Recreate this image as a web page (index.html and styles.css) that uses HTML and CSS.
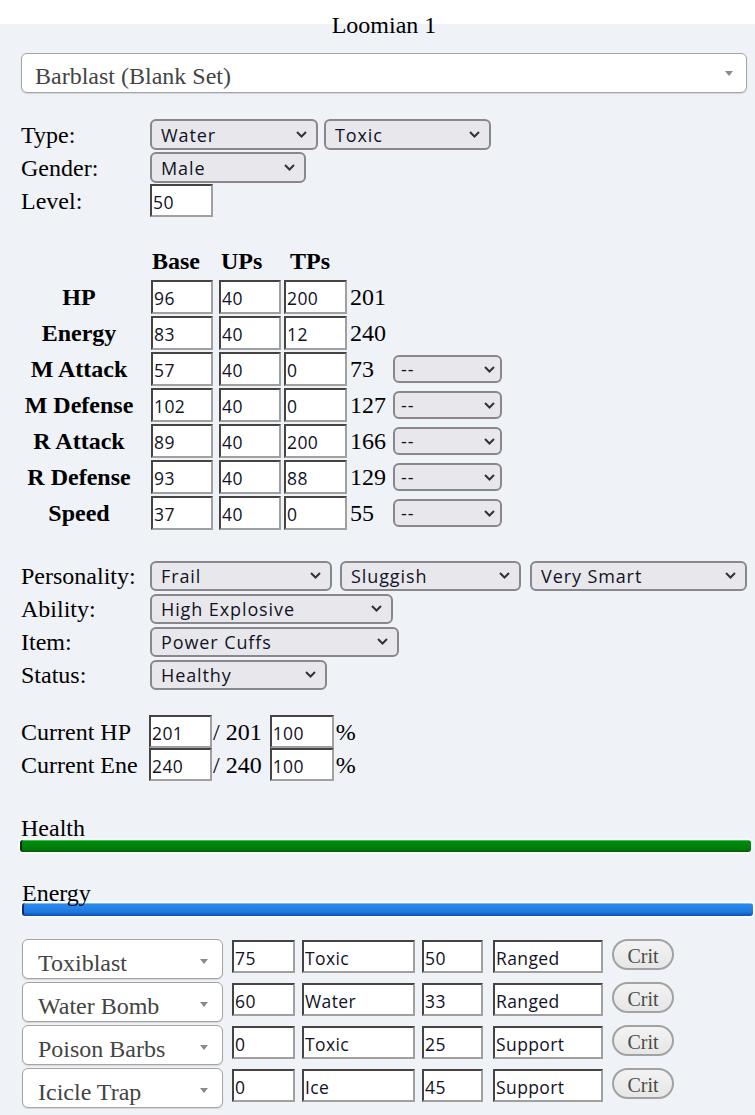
FILE: index.html
```html
<!DOCTYPE html>
<html lang="en">
<head>
<meta charset="utf-8">
<title>Loomian 1</title>
<link rel="stylesheet" href="styles.css">
</head>
<body>
<div class="loomian">
  <h2 class="title">Loomian 1</h2>

  <div class="set-select">
    <span>Barblast (Blank Set)</span>
    <span class="caret"></span>
  </div>

  <div class="info">
    <div class="row">
      <span class="label">Type:</span>
      <div class="sel w-type1"><span>Water</span><svg class="chev" viewBox="0 0 11 7"><path d="M1 1L5.5 5.5L10 1"/></svg></div>
      <div class="sel w-type2"><span>Toxic</span><svg class="chev" viewBox="0 0 11 7"><path d="M1 1L5.5 5.5L10 1"/></svg></div>
    </div>
    <div class="row">
      <span class="label">Gender:</span>
      <div class="sel w-gender"><span>Male</span><svg class="chev" viewBox="0 0 11 7"><path d="M1 1L5.5 5.5L10 1"/></svg></div>
    </div>
    <div class="row">
      <span class="label">Level:</span>
      <input class="num w-level" type="text" value="50">
    </div>
  </div>

  <div class="stats">
    <span></span><span class="head h-base">Base</span><span class="head h-up">UPs</span><span class="head h-tp">TPs</span><span></span><span></span>

    <span class="stat">HP</span>
    <input class="num" value="96"><input class="num up" value="40"><input class="num tp" value="200">
    <span class="val">201</span><span></span>

    <span class="stat">Energy</span>
    <input class="num" value="83"><input class="num up" value="40"><input class="num tp" value="12">
    <span class="val">240</span><span></span>

    <span class="stat">M Attack</span>
    <input class="num" value="57"><input class="num up" value="40"><input class="num tp" value="0">
    <span class="val">73</span>
    <div class="sel w-boost"><span>--</span><svg class="chev" viewBox="0 0 11 7"><path d="M1 1L5.5 5.5L10 1"/></svg></div>

    <span class="stat">M Defense</span>
    <input class="num" value="102"><input class="num up" value="40"><input class="num tp" value="0">
    <span class="val">127</span>
    <div class="sel w-boost"><span>--</span><svg class="chev" viewBox="0 0 11 7"><path d="M1 1L5.5 5.5L10 1"/></svg></div>

    <span class="stat">R Attack</span>
    <input class="num" value="89"><input class="num up" value="40"><input class="num tp" value="200">
    <span class="val">166</span>
    <div class="sel w-boost"><span>--</span><svg class="chev" viewBox="0 0 11 7"><path d="M1 1L5.5 5.5L10 1"/></svg></div>

    <span class="stat">R Defense</span>
    <input class="num" value="93"><input class="num up" value="40"><input class="num tp" value="88">
    <span class="val">129</span>
    <div class="sel w-boost"><span>--</span><svg class="chev" viewBox="0 0 11 7"><path d="M1 1L5.5 5.5L10 1"/></svg></div>

    <span class="stat">Speed</span>
    <input class="num" value="37"><input class="num up" value="40"><input class="num tp" value="0">
    <span class="val">55</span>
    <div class="sel w-boost"><span>--</span><svg class="chev" viewBox="0 0 11 7"><path d="M1 1L5.5 5.5L10 1"/></svg></div>
  </div>

  <div class="traits">
    <div class="row">
      <span class="label">Personality:</span>
      <div class="sel w-pers1"><span>Frail</span><svg class="chev" viewBox="0 0 11 7"><path d="M1 1L5.5 5.5L10 1"/></svg></div>
      <div class="sel w-pers2"><span>Sluggish</span><svg class="chev" viewBox="0 0 11 7"><path d="M1 1L5.5 5.5L10 1"/></svg></div>
      <div class="sel w-pers3"><span>Very Smart</span><svg class="chev" viewBox="0 0 11 7"><path d="M1 1L5.5 5.5L10 1"/></svg></div>
    </div>
    <div class="row">
      <span class="label">Ability:</span>
      <div class="sel w-ability"><span>High Explosive</span><svg class="chev" viewBox="0 0 11 7"><path d="M1 1L5.5 5.5L10 1"/></svg></div>
    </div>
    <div class="row">
      <span class="label">Item:</span>
      <div class="sel w-item"><span>Power Cuffs</span><svg class="chev" viewBox="0 0 11 7"><path d="M1 1L5.5 5.5L10 1"/></svg></div>
    </div>
    <div class="row">
      <span class="label">Status:</span>
      <div class="sel w-status"><span>Healthy</span><svg class="chev" viewBox="0 0 11 7"><path d="M1 1L5.5 5.5L10 1"/></svg></div>
    </div>
  </div>

  <div class="current">
    <div class="row">
      <span class="label">Current HP</span>
      <input class="num w-level" value="201">
      <span class="max">/ 201</span>
      <input class="num w-pct" value="100">
      <span class="pct">%</span>
    </div>
    <div class="row">
      <span class="label">Current Ene</span>
      <input class="num w-level" value="240">
      <span class="max">/ 240</span>
      <input class="num w-pct" value="100">
      <span class="pct">%</span>
    </div>
  </div>

  <div class="meter-label health-label">Health</div>
  <div class="meter health"></div>
  <div class="meter-label energy-label">Energy</div>
  <div class="meter energy"></div>

  <div class="moves">
    <div class="move">
      <div class="move-select"><span>Toxiblast</span><span class="caret"></span></div>
      <input class="num m-bp" value="75">
      <input class="num m-type" value="Toxic">
      <input class="num m-en" value="50">
      <input class="num m-cat" value="Ranged">
      <button class="crit">Crit</button>
    </div>
    <div class="move">
      <div class="move-select"><span>Water Bomb</span><span class="caret"></span></div>
      <input class="num m-bp" value="60">
      <input class="num m-type" value="Water">
      <input class="num m-en" value="33">
      <input class="num m-cat" value="Ranged">
      <button class="crit">Crit</button>
    </div>
    <div class="move">
      <div class="move-select"><span>Poison Barbs</span><span class="caret"></span></div>
      <input class="num m-bp" value="0">
      <input class="num m-type" value="Toxic">
      <input class="num m-en" value="25">
      <input class="num m-cat" value="Support">
      <button class="crit">Crit</button>
    </div>
    <div class="move">
      <div class="move-select"><span>Icicle Trap</span><span class="caret"></span></div>
      <input class="num m-bp" value="0">
      <input class="num m-type" value="Ice">
      <input class="num m-en" value="45">
      <input class="num m-cat" value="Support">
      <button class="crit">Crit</button>
    </div>
  </div>
</div>
</body>
</html>
```

FILE: styles.css
```css
* {
  box-sizing: border-box;
}

body {
  margin: 0;
  background: #ffffff;
  font-family: "Liberation Serif", "Times New Roman", serif;
  font-size: 24px;
  color: #000;
}

.loomian {
  width: 755px;
  min-height: 1115px;
  background: linear-gradient(#ffffff 0 24px, #eff2f7 24px);
  overflow: hidden;
}

.title {
  margin: 0;
  padding: 12px 0 0 13px;
  font-size: 24px;
  font-weight: normal;
  line-height: 26px;
  text-align: center;
}

/* big set picker and move pickers */
.set-select,
.move-select {
  display: flex;
  justify-content: space-between;
  background: #fff;
  border: 1.5px solid #a4a4a4;
  border-radius: 6px;
  box-shadow: 0 1px 1px rgba(0, 0, 0, 0.12);
  color: #444;
  line-height: 24px;
}

.set-select {
  margin: 15px 8px 0 21px;
  height: 40px;
  padding: 10px 13px 0 13px;
}

.caret {
  width: 0;
  height: 0;
  margin-top: 7px;
  border-left: 4px solid transparent;
  border-right: 4px solid transparent;
  border-top: 5px solid #8a8a8a;
}

/* form rows */
.row {
  display: flex;
  align-items: center;
  height: 33px;
  padding-left: 21px;
}

.label {
  width: 129px;
  flex: none;
  line-height: 26px;
}

.info {
  margin-top: 25px;
}

.sel {
  display: flex;
  align-items: center;
  justify-content: space-between;
  height: 31px;
  padding: 0 9px 0 9px;
  background: #e8e8ec;
  border: 2px solid #88888c;
  border-radius: 6px;
  font-family: "Open Sans", "DejaVu Sans", sans-serif;
  font-size: 18px;
  letter-spacing: 0.9px;
  color: #121226;
  flex: none;
}

.chev {
  width: 11px;
  height: 7px;
  fill: none;
  stroke: #333;
  stroke-width: 2;
}

.w-type1 { width: 168px; }
.w-type2 { width: 167px; margin-left: 6px; }
.w-gender { width: 156px; }
.w-boost { width: 109px; height: 28px; padding-right: 5px; padding-left: 6px; }
.w-pers1 { width: 182px; height: 30px; }
.w-pers2 { width: 181px; height: 30px; margin-left: 8px; }
.w-pers3 { width: 217px; height: 30px; margin-left: 9px; }
.w-ability { width: 243px; height: 30px; }
.w-item { width: 249px; height: 30px; }
.w-status { width: 177px; height: 30px; }

/* sunken text fields */
.num {
  display: block;
  margin: 0;
  height: 34px;
  padding: 2px 0 0 1px;
  background: #fff;
  border: 2px solid;
  border-color: #444 #a0a0a0 #a0a0a0 #444;
  border-radius: 0;
  font-family: "Open Sans", "DejaVu Sans", sans-serif;
  font-size: 17.5px;
  letter-spacing: 0.4px;
  color: #121226;
  outline: none;
}

.w-level {
  width: 63px;
  height: 33px;
}

.w-pct {
  width: 64px;
  height: 33px;
}

/* stat table */
.stats {
  display: grid;
  grid-template-columns: 131px 68px 65px 66px 43px 109px;
  grid-auto-rows: 36px;
  align-items: center;
  margin: 26px 0 0 20px;
}

.stats .num {
  width: 62px;
}

.stats .tp {
  width: 63px;
}

.head {
  font-weight: bold;
  line-height: 26px;
}

.h-base { padding-left: 1px; }
.h-up { padding-left: 2px; }
.h-tp { padding-left: 6px; }

.stat {
  font-weight: bold;
  text-align: center;
  padding-right: 13px;
  line-height: 26px;
}

.val {
  line-height: 26px;
}

/* personality / ability / item / status */
.traits {
  margin-top: 28px;
}

.current {
  margin-top: 24px;
}

.current .label {
  width: 128px;
}

.max {
  margin-left: 1px;
  line-height: 26px;
}

.current .w-pct {
  margin-left: 8px;
}

.pct {
  margin-left: 2px;
  line-height: 26px;
}

/* health and energy meters */
.meter-label {
  line-height: 22px;
  padding-left: 21px;
}

.health-label {
  margin-top: 36px;
}

.energy-label {
  margin-top: 30px;
  padding-left: 22px;
  position: relative;
  z-index: 1;
}

.meter {
  height: 12px;
  margin: 1px 4px 0 20px;
  border-radius: 3px;
  box-shadow: 0 0 0 1.5px #ffffff;
}

.health {
  background: linear-gradient(#38c24a 0 1.5px, #028a10 1.5px, #007a0a 9px, #005c06);
  border-left: 2px solid #0b3010;
}

.energy {
  margin-top: -1px;
  margin-left: 22px;
  margin-right: 2px;
  height: 13px;
  background: linear-gradient(#7fb9f6 0 1.5px, #2a8aec 1.5px, #1f78de 9px, #0a4fb0);
  border-left: 2px solid #10306a;
}

/* moves */
.moves {
  margin-top: 23px;
  padding-left: 22px;
}

.move {
  display: flex;
  align-items: flex-start;
  margin-bottom: 3px;
}

.move-select {
  width: 201px;
  height: 40px;
  padding: 11px 14px 0 15px;
  flex: none;
}

.move-select .caret {
  margin-top: 8px;
}

.move .num {
  margin-top: 1px;
  height: 33px;
}

.m-bp { width: 63px; margin-left: 9px; }
.m-type { width: 113px; margin-left: 7px; }
.m-en { width: 61px; margin-left: 7px; }
.m-cat { width: 110px; margin-left: 10px; }

.crit {
  width: 62px;
  height: 31px;
  margin-left: 9px;
  padding: 2px 0 0;
  background: linear-gradient(#f3f3f3, #e6e6e6);
  border: 2px solid #a2a2a2;
  border-radius: 16px;
  font-family: "Liberation Serif", "Times New Roman", serif;
  font-size: 20px;
  color: #4a4a4a;
  line-height: 22px;
}
```
